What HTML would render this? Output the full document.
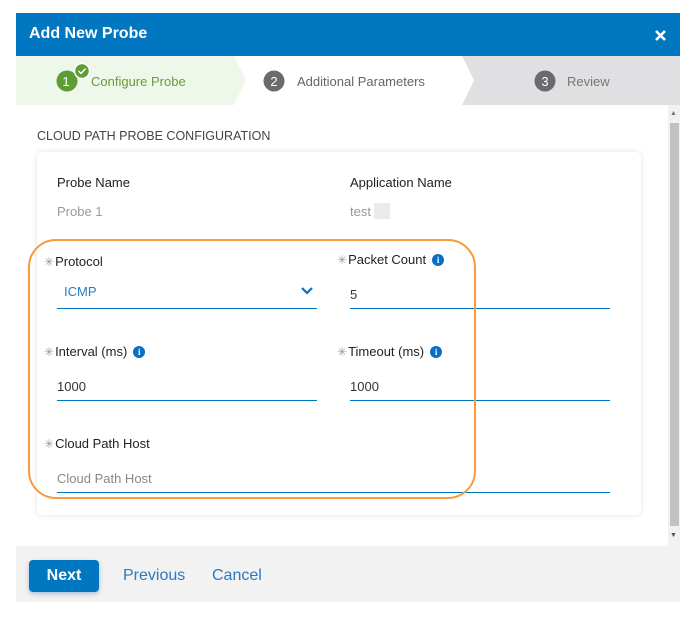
<!DOCTYPE html>
<html><head><style>
*{margin:0;padding:0;box-sizing:border-box}
body{width:692px;height:617px;background:#fff;font-family:"Liberation Sans",sans-serif;position:relative;overflow:hidden}
.a{position:absolute;white-space:nowrap}
.lbl{font-size:13px;color:#222}
.st{color:#999;font-size:12px;margin-right:1px}
.val{font-size:13px;color:#333}
.ln{position:absolute;height:1px;background:#0077c0}
.i{display:inline-block;width:12px;height:12px;border-radius:50%;background:#0a6fc2;color:#fff;font-size:9px;font-weight:bold;text-align:center;line-height:12px;font-family:"Liberation Serif",serif;vertical-align:1px;margin-left:6px}
</style></head><body>
<div class="a" style="left:16px;top:13px;width:664px;height:43px;background:#0077c0"></div>
<div class="a" style="left:29px;top:25px;color:#fff;font-size:16px;font-weight:bold">Add New Probe</div>
<svg class="a" style="left:654px;top:29px" width="13" height="13"><path d="M2 2 L11 11 M11 2 L2 11" stroke="#fff" stroke-width="2.6"/></svg>
<svg class="a" style="left:16px;top:56px" width="664" height="49">
<rect x="0" y="0" width="664" height="49" fill="#e0e0e2"/>
<polygon points="0,0 446,0 458,24.5 446,49 0,49" fill="#fff"/>
<polygon points="0,0 218,0 230,24.5 218,49 0,49" fill="#eef8ea"/>
<circle cx="51" cy="25" r="10.5" fill="#5e9c35"/>
<text x="50" y="30" fill="#fff" font-size="13" text-anchor="middle" font-family="Liberation Sans">1</text>
<circle cx="66" cy="15" r="7.5" fill="#5e9c35" stroke="#fff" stroke-width="1.5"/>
<path d="M62.5 15 L65 17.5 L69.5 12.5" stroke="#fff" stroke-width="1.4" fill="none"/>
<circle cx="258" cy="25" r="10.5" fill="#6b6b6e"/>
<text x="258" y="30" fill="#fff" font-size="13" text-anchor="middle" font-family="Liberation Sans">2</text>
<circle cx="529" cy="25" r="10.5" fill="#6b6b6e"/>
<text x="529" y="30" fill="#fff" font-size="13" text-anchor="middle" font-family="Liberation Sans">3</text>
</svg>
<div class="a" style="left:91px;top:74px;font-size:13px;color:#6a9a3a">Configure Probe</div>
<div class="a" style="left:297px;top:74px;font-size:13px;color:#666">Additional Parameters</div>
<div class="a" style="left:567px;top:74px;font-size:13px;color:#777">Review</div>
<div class="a" style="left:668px;top:105px;width:12px;height:441px;background:#f1f1f1"></div>
<div class="a" style="left:670px;top:123px;width:9px;height:403px;background:#c1c1c1"></div>
<div class="a" style="left:670px;top:110px;font-size:7px;color:#777">▲</div>
<div class="a" style="left:670px;top:532px;font-size:7px;color:#555">▼</div>
<div class="a" style="left:37px;top:129px;font-size:12.5px;color:#444">CLOUD PATH PROBE CONFIGURATION</div>
<div class="a" style="left:37px;top:152px;width:604px;height:363px;background:#fff;border-radius:5px;box-shadow:0 0 6px rgba(0,0,0,0.12)"></div>
<div class="a lbl" style="left:57px;top:175px">Probe Name</div>
<div class="a lbl" style="left:350px;top:175px">Application Name</div>
<div class="a" style="left:57px;top:204px;font-size:13px;color:#999">Probe 1</div>
<div class="a" style="left:350px;top:204px;font-size:13px;color:#999">test</div>
<div class="a" style="left:374px;top:203px;width:16px;height:16px;background:#ebebeb"></div>
<div class="a lbl" style="left:44px;top:254px"><span class="st">✳</span>Protocol</div>
<div class="a lbl" style="left:337px;top:252px"><span class="st">✳</span>Packet Count<span class="i">i</span></div>
<div class="a" style="left:64px;top:284px;font-size:13px;color:#2a7ac0">ICMP</div>
<svg class="a" style="left:300px;top:286px" width="14" height="10"><path d="M2 2 L7 7 L12 2" stroke="#0a6fc2" stroke-width="2.2" fill="none"/></svg>
<div class="ln" style="left:57px;top:308px;width:260px"></div>
<div class="a val" style="left:350px;top:287px">5</div>
<div class="ln" style="left:350px;top:308px;width:260px"></div>
<div class="a lbl" style="left:44px;top:344px"><span class="st">✳</span>Interval (ms)<span class="i">i</span></div>
<div class="a lbl" style="left:337px;top:344px"><span class="st">✳</span>Timeout (ms)<span class="i">i</span></div>
<div class="a val" style="left:57px;top:379px">1000</div>
<div class="ln" style="left:57px;top:400px;width:260px"></div>
<div class="a val" style="left:350px;top:379px">1000</div>
<div class="ln" style="left:350px;top:400px;width:260px"></div>
<div class="a lbl" style="left:44px;top:436px"><span class="st">✳</span>Cloud Path Host</div>
<div class="a" style="left:57px;top:471px;font-size:13px;color:#888">Cloud Path Host</div>
<div class="ln" style="left:57px;top:492px;width:553px"></div>
<div class="a" style="left:28px;top:239px;width:448px;height:260px;border:2.5px solid #f89c3a;border-radius:28px"></div>
<div class="a" style="left:16px;top:546px;width:664px;height:56px;background:#f2f2f2"></div>
<div class="a" style="left:29px;top:560px;width:70px;height:32px;background:#0077c0;border-radius:4px;color:#fff;font-size:16px;font-weight:bold;text-align:center;line-height:32px;box-shadow:0 2px 5px rgba(0,80,160,0.3)">Next</div>
<div class="a" style="left:123px;top:567px;font-size:16px;color:#2a7ac0">Previous</div>
<div class="a" style="left:212px;top:567px;font-size:16px;color:#2a7ac0">Cancel</div>
</body></html>
